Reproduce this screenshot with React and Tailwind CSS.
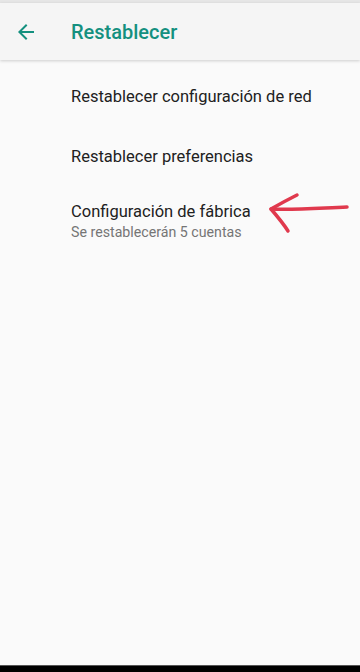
import React from "react";

const items = [
  { title: "Restablecer configuración de red" },
  { title: "Restablecer preferencias" },
];

export default function App() {
  return (
    <div
      className="w-[360px] h-[672px] flex flex-col bg-[#fafafa] overflow-hidden"
      style={{ fontFamily: "Roboto, 'Noto Sans', sans-serif" }}
    >
      <div className="h-[3px] bg-[#e6e6e6]" />
      {/* Toolbar */}
      <div className="h-[57px] flex items-center bg-[#f5f5f5] shadow-[0_1px_3px_rgba(0,0,0,0.18)] relative z-10">
        <div className="w-[71px] pl-[14px] flex items-center">
          <svg width="24" height="24" viewBox="0 0 24 24" fill="#14907f">
            <path d="M20 11H7.83l5.59-5.59L12 4l-8 8 8 8 1.41-1.41L7.83 13H20v-2z" />
          </svg>
        </div>
        <div className="text-[20px] font-medium text-[#14907f] pt-[1px]">Restablecer</div>
      </div>

      {/* List */}
      <div className="flex flex-col pt-[7px]">
        {items.map((it) => (
          <div key={it.title} className="h-[60px] flex items-center pl-[71px]">
            <span className="text-[16.5px] text-[#212121]">{it.title}</span>
          </div>
        ))}
        <div className="relative h-[60px] flex flex-col justify-center pl-[71px] mt-[4px]">
          <span className="text-[16.5px] text-[#212121] leading-[21px]">Configuración de fábrica</span>
          <span className="text-[14.2px] text-[#757575] leading-[20px]">Se restablecerán 5 cuentas</span>
          <svg
            className="absolute left-[265px] top-[-2px]"
            width="90"
            height="48"
            viewBox="0 0 90 48"
            fill="none"
            stroke="#e0394d"
            strokeWidth="3.5"
            strokeLinecap="round"
            strokeLinejoin="round"
          >
            <path d="M6 20 C30 21 55 19 82 18" />
            <path d="M32 6 C22 11 13 16 6 20 C12 27 18 34 23 42" />
          </svg>
        </div>
      </div>

      <div className="flex-1" />
      <div className="h-[7px] bg-black border-t border-[#555]" />
    </div>
  );
}
